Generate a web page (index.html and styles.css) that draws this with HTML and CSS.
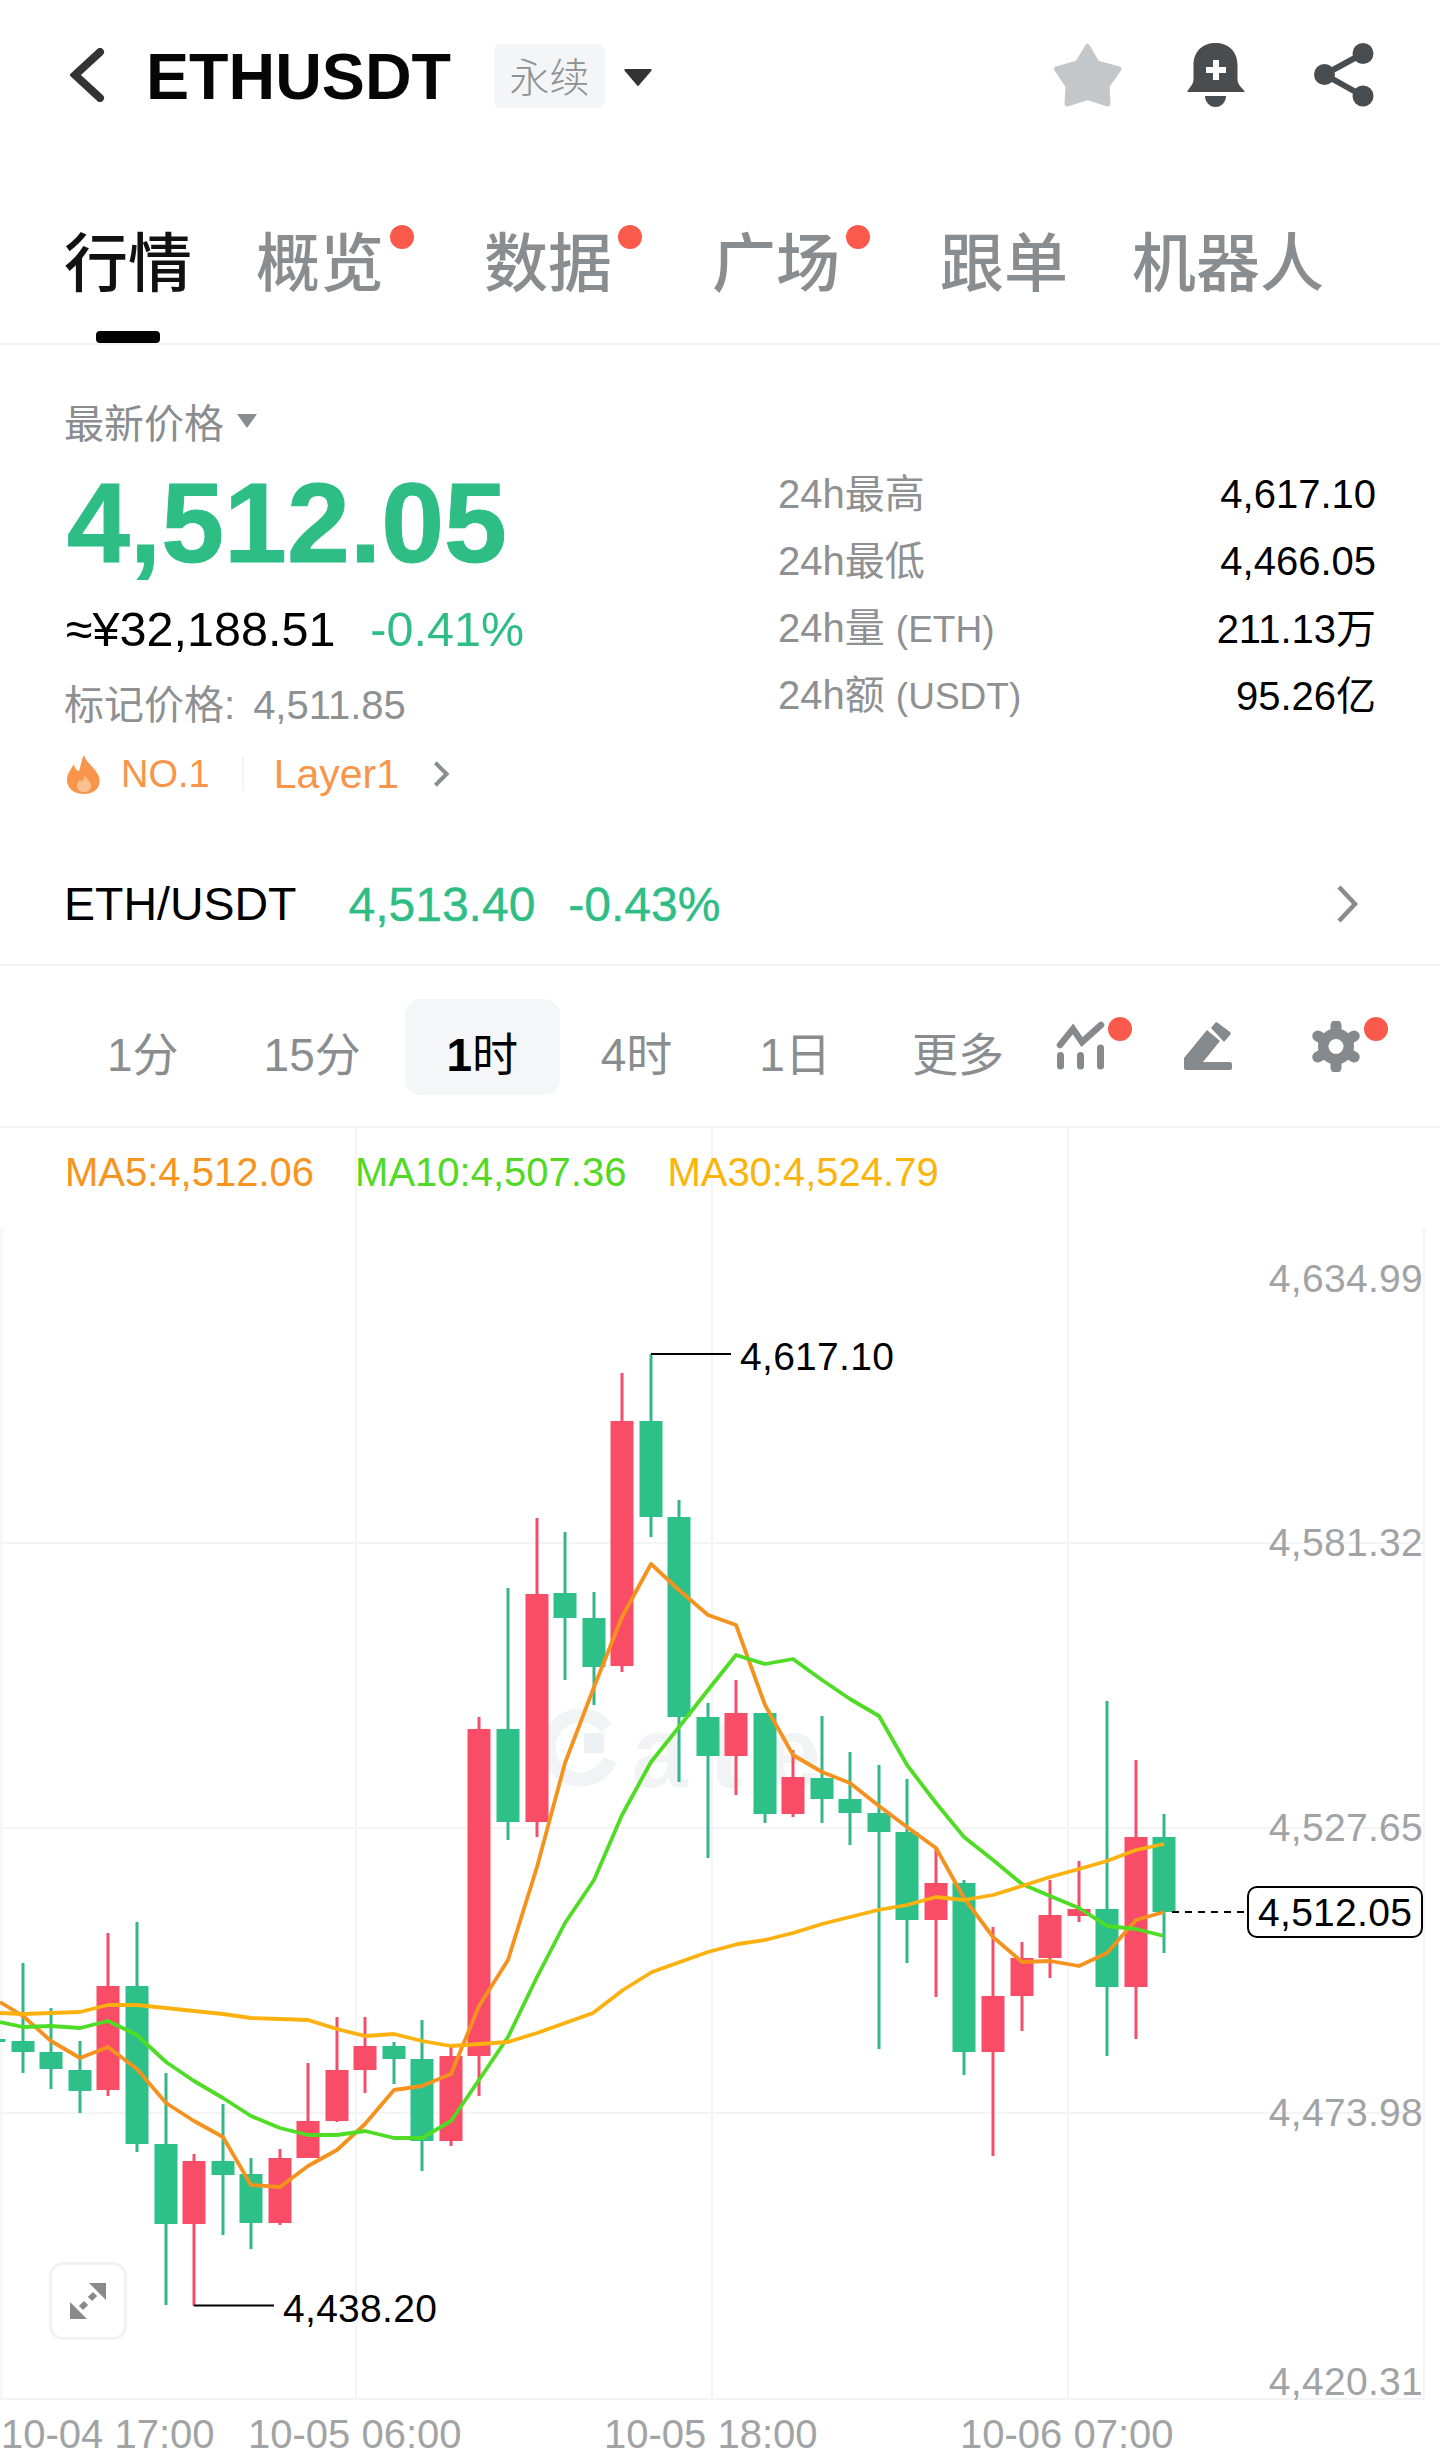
FILE: index.html
```html
<!DOCTYPE html>
<html lang="zh-CN">
<head>
<meta charset="utf-8">
<title>ETHUSDT</title>
<link rel="stylesheet" href="styles.css">
</head>
<body>
<div class="page">
  <header class="topbar">
    <svg class="back" viewBox="0 0 36 54"><path d="M30 4 5 27l25 23" /></svg>
    <h1 class="symbol">ETHUSDT</h1>
    <span class="tag">永续</span>
    <svg class="caret" viewBox="0 0 30 20"><path d="M3 3h24L15 17z"/></svg>
    <div class="top-actions">
      <svg class="ic-star" viewBox="0 0 68 64"><path d="M33.5 3.5 43 20l22 6-12 17 1 18-20.500-6.500L13 61l1-18L2.500 26l21-6z"/></svg>
      <svg class="ic-bell" viewBox="0 0 58 64"><path class="fill-dark" d="M6.500 22C6.500 8 16 0 28.500 0s22 8 22 22v14c0 3 1 5 2.500 7l4.500 5c.5 1-.5 1-1.500 1H2c-1 0-2 0-1.500-1L4 43c1.500-2 2.500-4 2.500-7z"/><path class="fill-dark" d="M18 53h21c0 6-4.500 11-10.500 11S18 59 18 53z"/><path class="fill-white" d="M26 17h6v7h7v6h-7v7h-6v-7h-7v-6h7z"/></svg>
      <svg class="ic-share" viewBox="0 0 60 64"><g class="fill-dark"><circle cx="49" cy="10.500" r="10.500"/><circle cx="10.500" cy="31.500" r="10.500"/><circle cx="49" cy="53" r="10.500"/></g><path class="share-line" d="M49 10.500 10.500 31.500 49 53"/></svg>
    </div>
  </header>

  <nav class="tabs">
    <a class="tab active">行情</a>
    <a class="tab dot">概览</a>
    <a class="tab dot">数据</a>
    <a class="tab dot">广场</a>
    <a class="tab">跟单</a>
    <a class="tab">机器人</a>
  </nav>

  <section class="summary">
    <div class="left">
      <div class="price-label">最新价格<svg class="mini-caret" viewBox="0 0 20 14"><path d="M0 0h20L10 14z"/></svg></div>
      <div class="price">4,512.05</div>
      <div class="cny"><span>≈¥32,188.51</span><span class="green">-0.41%</span></div>
      <div class="mark"><span class="mark-k">标记价格:</span><span>4,511.85</span></div>
      <div class="hot">
        <svg class="flame" viewBox="0 0 36 39"><path class="flame-out" d="M18 0c2 8 12 13 15 22 3 10-5 17-15 17S0 33 1 23c1-6 5-10 7-14 1 5 3 7 5 7 2-5 2-11 5-16z"/><path class="flame-in" d="M19 20c1 4 6 6 6 11 0 4-3 6-7 6s-7-2-7-6c0-3 2-5 3-6 1 1 2 2 3 1 1-2 1-4 2-6z"/></svg>
        <span class="no1">NO.1</span><i class="sep"></i><span class="layer">Layer1</span>
        <svg class="hot-arrow" viewBox="0 0 16 24"><path d="M3 2l10 10L3 22"/></svg>
      </div>
    </div>
    <dl class="stats">
      <div class="stat"><dt>24h最高</dt><dd>4,617.10</dd></div>
      <div class="stat"><dt>24h最低</dt><dd>4,466.05</dd></div>
      <div class="stat"><dt>24h量 <span class="unit">(ETH)</span></dt><dd class="tall">211.13万</dd></div>
      <div class="stat"><dt>24h额 <span class="unit">(USDT)</span></dt><dd class="tall">95.26亿</dd></div>
    </dl>
  </section>

  <section class="pair">
    <span class="pair-name">ETH/USDT</span>
    <span class="pair-val">4,513.40</span>
    <span class="pair-val">-0.43%</span>
    <svg class="pair-arrow" viewBox="0 0 24 40"><path d="M4 3l16 17L4 37"/></svg>
  </section>

  <section class="periods">
    <a class="period p1">1分</a>
    <a class="period p15">15分</a>
    <a class="period now"><b>1</b>时</a>
    <a class="period p4">4时</a>
    <a class="period pd">1日</a>
    <a class="period pm">更多</a>
    <span class="tool t-ind"><svg viewBox="0 0 50 50"><path class="zig" d="M4 24 17 8l9 13L45 4"/><path class="bars" d="M4.500 34.500V45M24.500 34.500V45M44.500 27V45"/></svg></span>
    <span class="tool t-pen"><svg viewBox="0 0 48 48"><path class="tool-fill" d="M0 36 23 8l13 11-17 21h27c1 0 2 1 2 2v4c0 1-1 2-2 2H2c-1 0-2-1-2-2z"/><path class="tool-fill" d="M27 6l4-5c1-1 2-1 3 0l12 9c1 1 1 2 0 3l-6 7z"/></svg></span>
    <span class="tool t-gear"><svg viewBox="0 0 48 51"><circle class="tool-fill" cx="24" cy="25.500" r="18"/><path class="teeth" d="M24 4.500v42M5.800 15 42.200 36M42.200 15 5.800 36"/><circle class="hole" cx="24" cy="25.500" r="7.500"/></svg></span>
  </section>

  <section class="chart">
    <svg class="plot" viewBox="0 1128 1440 1332">
      <path class="grid" d="M1.500 1228V2399M356 1128V2399M712 1128V2399M1068 1128V2399M1424 1228V2399M0 1543H1424M0 1828H1424M0 2113H1424M0 2399H1424"/>
      <g class="mark-wm">
        <path class="wm-ring" d="M606 1728A32 32 0 1 0 610 1760"/>
        <path class="wm-fill" d="M584 1733h20v20h-20z"/>
        <text class="wm-text" x="632" y="1787">ate</text>
      </g>
      <path class="wick g" d="M23 1963V2073M51 2008V2089M80 2041V2113M137 1922V2152M166 2073V2305M223 2104V2235M251 2158V2249M394 2042V2084M422 2020V2171M508 1588V1840M565 1532V1680M594 1592V1705M651 1354V1537M679 1500V1782M708 1703V1858M765 1713V1823M822 1716V1823M850 1752V1845M879 1765V2049M907 1779V1963M964 1880V2075M1107 1701V2056M1164 1814V1953"/>
      <path class="wick r" d="M108 1933V2096M194 2154V2306M280 2149V2225M308 2063V2158M337 2017V2122M365 2017V2093M451 2045V2146M479 1717V2096M537 1518V1837M622 1373V1672M736 1680V1795M793 1750V1817M936 1848V1997M993 1927V2156M1022 1942V2031M1050 1880V1978M1079 1861V1922M1136 1760V2039"/>
      <path class="body g" d="M0 2039h5.500v3H0zM11.500 2041h23v11h-23zM39.500 2052h23v17h-23zM68.500 2070h23v21h-23zM125.500 1986h23v158h-23zM154.500 2144h23v80h-23zM211.500 2161h23v14h-23zM239.500 2174h23v49h-23zM382.500 2046h23v13h-23zM410.500 2059h23v82h-23zM496.500 1729h23v93h-23zM553.500 1593h23v25h-23zM582.500 1618h23v49h-23zM639.500 1421h23v96h-23zM667.500 1517h23v200h-23zM696.500 1717h23v39h-23zM753.500 1713h23v101h-23zM810.500 1778h23v21h-23zM838.500 1799h23v14h-23zM867.500 1813h23v19h-23zM895.500 1832h23v88h-23zM952.500 1883h23v169h-23zM1095.500 1909h23v78h-23zM1152.500 1837h23v75h-23z"/>
      <path class="body r" d="M96.500 1986h23v104h-23zM182.500 2161h23v63h-23zM268.500 2158h23v65h-23zM296.500 2121h23v37h-23zM325.500 2070h23v51h-23zM353.500 2046h23v24h-23zM439.500 2056h23v85h-23zM467.500 1729h23v327h-23zM525.500 1594h23v228h-23zM610.500 1421h23v245h-23zM724.500 1713h23v43h-23zM781.500 1777h23v37h-23zM924.500 1883h23v37h-23zM981.500 1996h23v56h-23zM1010.500 1958h23v38h-23zM1038.500 1915h23v43h-23zM1067.500 1909h23v7h-23zM1124.500 1837h23v150h-23z"/>
      <polyline class="ma ma5" points="0,2002 23,2016 51,2041 80,2058 108,2047 137,2069 166,2103 194,2121 223,2137 251,2185 280,2187 308,2166 337,2150 365,2124 394,2090 422,2086 451,2074 479,2006 508,1960 537,1867 565,1763 594,1687 622,1617 651,1564 679,1590 708,1615 736,1625 765,1705 793,1755 822,1772 850,1783 879,1806 907,1827 936,1848 964,1898 993,1937 1022,1962 1050,1961 1079,1966 1107,1953 1136,1920 1164,1912"/>
      <polyline class="ma ma10" points="0,2022 23,2027 51,2026 80,2028 108,2021 137,2035 166,2062 194,2081 223,2098 251,2116 280,2128 308,2135 337,2135 365,2131 394,2138 422,2138 451,2121 479,2080 508,2037 537,1977 565,1923 594,1880 622,1815 651,1762 679,1727 708,1690 736,1655 765,1664 793,1659 822,1680 850,1699 879,1716 907,1765 936,1803 964,1837 993,1860 1022,1884 1050,1896 1079,1908 1107,1926 1136,1929 1164,1936"/>
      <polyline class="ma ma30" points="0,2013 23,2014 51,2013 80,2012 108,2005 137,2005 166,2008 194,2011 223,2014 251,2018 280,2019 308,2020 337,2029 365,2036 394,2034 422,2041 451,2046 479,2044 508,2042 537,2033 565,2023 593,2013 623,1990 652,1972 680,1962 708,1952 738,1944 765,1940 793,1933 822,1924 850,1917 878,1910 907,1905 936,1897 964,1900 993,1895 1022,1886 1050,1877 1079,1869 1107,1861 1136,1850 1164,1844"/>
      <path class="leader" d="M651 1354H731M194 2305.500H274"/>
      <text class="peak" x="740" y="1370">4,617.10</text>
      <text class="peak" x="283" y="2322">4,438.20</text>
      <path class="dash" d="M1172 1912H1245"/>
      <rect class="last-box" x="1248" y="1887" width="174" height="50" rx="9"/>
      <text class="peak" x="1258" y="1926">4,512.05</text>
      <g class="axis-y">
        <text x="1423" y="1292">4,634.99</text>
        <text x="1423" y="1556">4,581.32</text>
        <text x="1423" y="1841">4,527.65</text>
        <text x="1423" y="2126">4,473.98</text>
        <text x="1423" y="2395">4,420.31</text>
      </g>
      <g class="axis-x">
        <text x="1" y="2448">10-04 17:00</text>
        <text x="248" y="2448">10-05 06:00</text>
        <text x="604" y="2448">10-05 18:00</text>
        <text x="960" y="2448">10-06 07:00</text>
      </g>
    </svg>
    <div class="legend">
      <span class="c5">MA5:4,512.06</span>
      <span class="c10">MA10:4,507.36</span>
      <span class="c30">MA30:4,524.79</span>
    </div>
    <div class="expand">
      <svg viewBox="0 0 36 36"><path class="arrow-h" d="M36 0v17L19 0zM0 36V19l17 17z"/><path class="arrow-s" d="M25 11l-5 5M16 20l-5 5"/></svg>
    </div>
  </section>
</div>
</body>
</html>
```

FILE: styles.css
```css
* { box-sizing: border-box; }
html, body { margin: 0; padding: 0; background: #fff; }
body { font-family: "Liberation Sans", "Noto Sans CJK SC", sans-serif; color: #000; }
.page { width: 1440px; height: 2460px; overflow: hidden; }
svg { display: block; }

/* top bar */
.topbar { display: flex; align-items: center; height: 150px; padding-left: 70px; }
.back { width: 36px; height: 54px; }
.back path { fill: none; stroke: #333; stroke-width: 8; stroke-linecap: round; stroke-linejoin: miter; }
.symbol { margin: 3px 0 0 40px; font-size: 64.600px; line-height: 70px; font-weight: 700; color: #060606; letter-spacing: 0; }
.tag { margin: 2px 0 0 43px; width: 111px; height: 64px; background: #f3f5f6; border-radius: 7px; font-size: 40px; line-height: 68px; text-align: center; color: #8e9193; font-weight: 300; }
.caret { margin: 4px 0 0 17px; width: 32px; height: 21px; }
.caret path { fill: #333; stroke: #333; stroke-width: 2; stroke-linejoin: round; }
.top-actions { margin-left: auto; display: flex; align-items: center; padding-right: 66px; }
.ic-star { width: 68px; height: 64px; }
.ic-star path { fill: #c4c7ca; stroke: #c4c7ca; stroke-width: 5; stroke-linejoin: round; }
.ic-bell { width: 58px; height: 64px; margin-left: 65px; }
.ic-share { width: 60px; height: 64px; margin-left: 69px; }
.fill-dark { fill: #4a4d50; }
.fill-white { fill: #fff; }
.share-line { fill: none; stroke: #4a4d50; stroke-width: 6; }

/* tabs */
.tabs { display: flex; gap: 64px; height: 195px; padding: 79px 0 0 64px; border-bottom: 2px solid #f2f3f4; }
.tab { position: relative; height: 114px; font-size: 64px; line-height: 70px; font-weight: 500; color: #8a8d8f; white-space: nowrap; }
.tab.dot { padding-right: 36px; }
.tab.dot::after { content: ""; position: absolute; right: 6px; top: -4px; width: 24px; height: 24px; border-radius: 50%; background: #f95a4b; }
.tab.active { color: #111; }
.tab.active::after { content: ""; position: absolute; left: 32px; bottom: 0; width: 64px; height: 12px; border-radius: 4px; background: #000; }

/* summary */
.summary { display: flex; height: 511px; padding: 48px 60px 0 64px; }
.left { width: 714px; }
.price-label { display: flex; align-items: center; height: 56px; font-size: 40px; color: #8a8d8f; }
.mini-caret { width: 20px; height: 14px; margin: 0 0 0 13px; }
.mini-caret path { fill: #8a8d8f; }
.price { height: 132px; margin: 8px 0 0 3px; font-size: 113px; line-height: 132px; font-weight: 700; color: #2dbd85; -webkit-text-stroke: 1px #2dbd85; }
.cny { display: flex; gap: 35px; height: 66px; margin: 7px 0 0 2px; font-size: 48.500px; line-height: 66px; color: #000; }
.green { color: #2dbd85; }
.mark { display: flex; height: 66px; margin-top: 9px; font-size: 40px; line-height: 68px; color: #8e9092; }
.mark-k { margin-right: 18px; }
.hot { display: flex; align-items: center; height: 66px; margin-top: 4px; color: #f8954a; }
.flame { width: 36px; height: 39px; margin-left: 2px; }
.flame-out { fill: #f8954a; }
.flame-in { fill: #fbc08f; }
.no1 { margin-left: 19px; font-size: 38px; }
.sep { width: 2px; height: 34px; margin: 0 30px 0 32px; background: #f2f3f4; }
.layer { font-size: 41px; }
.hot-arrow { width: 18px; height: 28px; margin-left: 33px; }
.hot-arrow path { fill: none; stroke: #8a8d8f; stroke-width: 3.500; }

.stats { margin: 67px 0 0 0; width: 598px; height: 268px; }
.stat { display: flex; justify-content: space-between; align-items: center; height: 67px; font-size: 40px; }
.stat dt { color: #8e9092; padding-bottom: 6px; }
.unit { font-size: 37px; }
.stat dd { margin: 0; color: #000; padding-top: 2px; }
.stat dd.tall { padding-top: 0; padding-bottom: 4px; }

/* pair row */
.pair { display: flex; align-items: center; height: 110px; padding: 0 81px 12px 64px; font-size: 48px; border-bottom: 2px solid #f2f3f4; }
.pair-name { color: #000; font-size: 46.500px; margin-right: 52px; }
.pair-val { color: #2dbd85; margin-right: 33px; -webkit-text-stroke: 0.4px #2dbd85; }
.pair-arrow { margin-left: auto; width: 24px; height: 40px; }
.pair-arrow path { fill: none; stroke: #8a8d8f; stroke-width: 4.500; }

/* period row */
.periods { position: relative; display: flex; align-items: center; height: 162px; border-bottom: 2px solid #f2f3f4; font-size: 46px; color: #8a8d8f; }
.period { align-self: flex-start; margin-top: 33px; height: 96px; white-space: nowrap; line-height: 112px; }
.p1 { margin-left: 107px; }
.p15 { margin-left: 85px; }
.now { margin-left: 44px; width: 155px; background: #f4f6f7; border-radius: 16px; color: #000; text-align: center; }
.p4 { margin-left: 41px; }
.pd { margin-left: 87px; }
.pm { margin-left: 81px; }
.tool { display: block; flex: none; position: relative; }
.tool::after { content: ""; position: absolute; top: -4px; width: 24px; height: 24px; border-radius: 50%; background: #f95a4b; }
.t-ind { width: 50px; height: 50px; margin-left: 52px; }
.t-ind::after { left: 52px; }
.t-pen { width: 48px; height: 48px; margin-left: 78px; }
.t-pen::after { display: none; }
.t-gear { width: 48px; height: 51px; margin-left: 80px; }
.t-gear::after { left: 52px; top: -4px; }
.zig { fill: none; stroke: #868a8c; stroke-width: 6.500; stroke-linecap: round; stroke-linejoin: miter; }
.bars { fill: none; stroke: #868a8c; stroke-width: 7; stroke-linecap: round; }
.tool-fill { fill: #868a8c; }
.teeth { fill: none; stroke: #868a8c; stroke-width: 11; stroke-linecap: round; }
.hole { fill: #fff; }

/* chart */
.chart { position: relative; height: 1332px; }
.plot { width: 1440px; height: 1332px; }
.grid { fill: none; stroke: #f4f4f6; stroke-width: 2; }
.wm-ring { fill: none; stroke: #f1f3f5; stroke-width: 14; }
.wm-fill { fill: #eef1f4; }
.wm-text { font-family: "Liberation Sans", sans-serif; font-size: 100px; font-weight: 700; letter-spacing: 22px; fill: #f1f3f5; }
.wick { fill: none; stroke-width: 3; }
.wick.g { stroke: #34b58c; }
.wick.r { stroke: #f0506a; }
.body.g { fill: #2dc088; }
.body.r { fill: #f94c66; }
.ma { fill: none; stroke-width: 3.800; stroke-linejoin: round; }
.ma5 { stroke: #f5921e; }
.ma10 { stroke: #4fdc24; }
.ma30 { stroke: #fdb10f; }
.leader { fill: none; stroke: #000; stroke-width: 2; }
.peak { font-family: "Liberation Sans", sans-serif; font-size: 39px; letter-spacing: 0.300px; fill: #000; }
.dash { fill: none; stroke: #000; stroke-width: 2; stroke-dasharray: 7 6; }
.last-box { fill: #fff; stroke: #000; stroke-width: 2; }
.axis-y text { font-family: "Liberation Sans", sans-serif; font-size: 39px; letter-spacing: 0.300px; fill: #a1a3a5; text-anchor: end; }
.axis-x text { font-family: "Liberation Sans", sans-serif; font-size: 40px; fill: #a1a3a5; }

.legend { position: absolute; left: 65px; top: 19.500px; display: flex; gap: 41px; font-size: 40px; line-height: 48px; }
.c5 { color: #f7931e; }
.c10 { color: #52d926; }
.c30 { color: #fdb40a; }

.expand { position: absolute; left: 49px; top: 1134px; width: 78px; height: 78px; display: flex; align-items: center; justify-content: center; background: #fff; border: 3px solid #f2f2f2; border-radius: 14px; }
.expand svg { width: 36px; height: 36px; }
.arrow-h { fill: #8a8a8a; }
.arrow-s { fill: none; stroke: #8a8a8a; stroke-width: 6; }
```
